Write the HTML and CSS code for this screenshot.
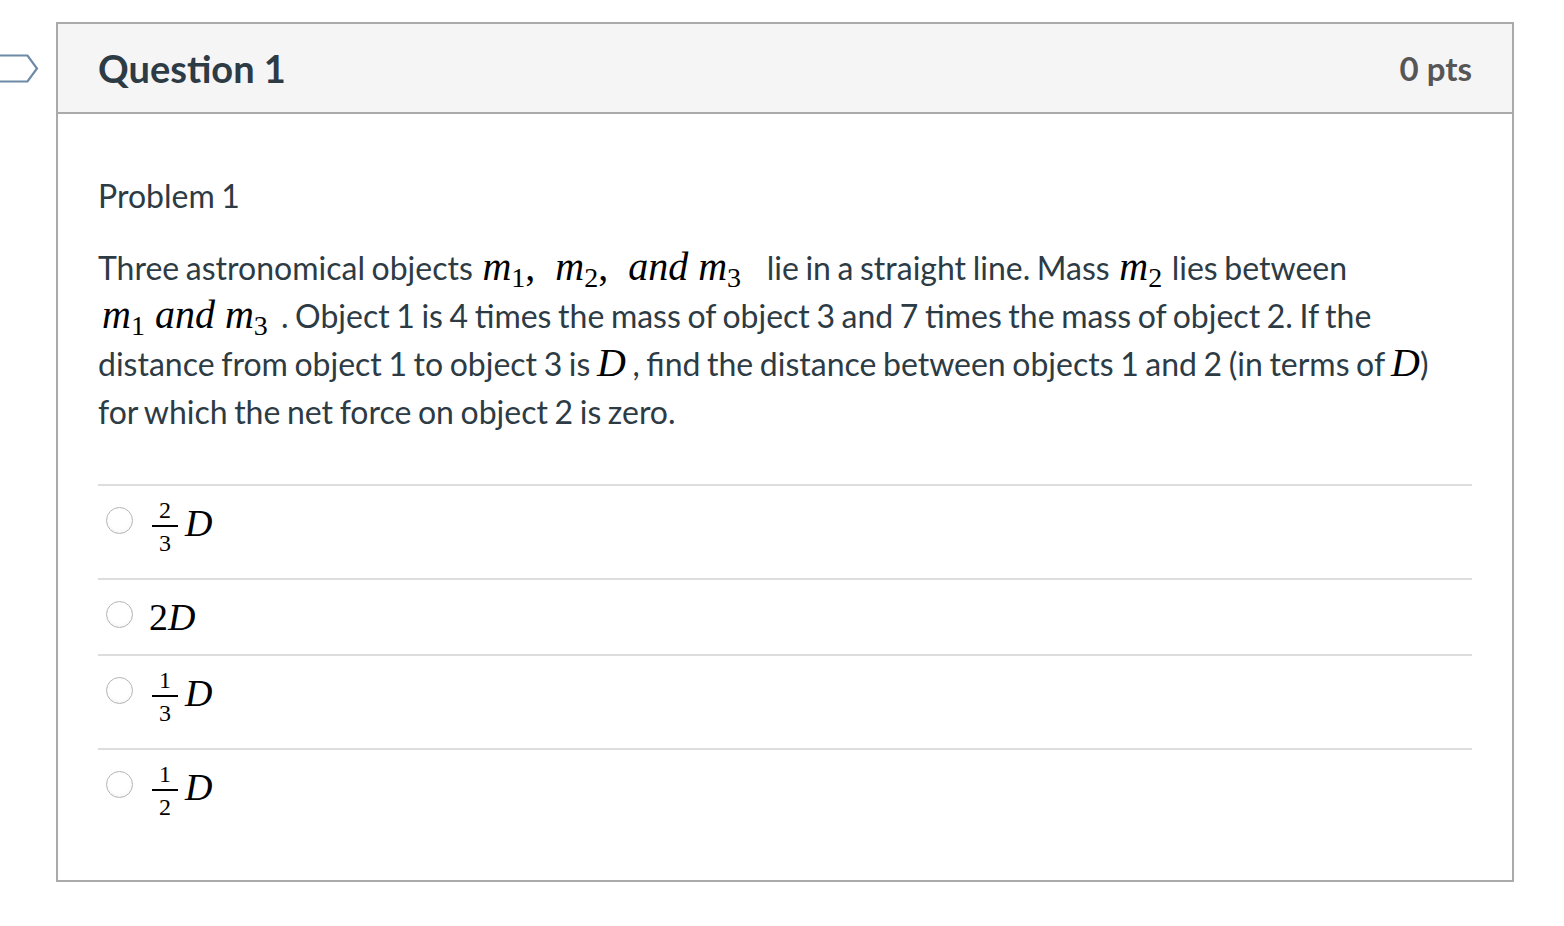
FILE: index.html
```html
<!DOCTYPE html>
<html lang="en">
<head>
<meta charset="utf-8">
<title>Question 1</title>
<link rel="stylesheet" href="styles.css">
</head>
<body>
<div class="page">
  <div class="flag">
    <svg width="40" height="30" viewBox="0 0 40 30"><path d="M-4 1.5 H27.5 L37 14.5 L27.5 27.5 H-4" fill="none" stroke="#6d8aa6" stroke-width="2.2"/></svg>
  </div>
  <div class="question">
    <div class="q-header">
      <h2 class="q-title">Question 1</h2>
      <div class="q-pts">0 pts</div>
    </div>
    <div class="q-body">
      <p class="para">Problem 1</p>
      <p class="para">Three astronomical objects <span class="math pad"><i>m</i><sub>1</sub>, &nbsp;<i>m</i><sub>2</sub>, &nbsp;<i>and</i> <i>m</i><sub>3</sub></span><span class="gap"></span> lie in a straight line. Mass <span class="math pad"><i>m</i><sub>2</sub></span> lies between <span class="math nowrap"><i class="lead">m</i><sub>1</sub> <i>and</i> <i>m</i><sub>3</sub></span>&nbsp; . Object 1 is 4 times the mass of object 3 and 7 times the mass of object 2. If the distance from object 1 to object 3 is <span class="math"><i>D</i></span> , find the distance between objects 1 and 2 (in terms of <span class="math"><i>D</i></span>) for which the net force on object 2 is zero.</p>
      <div class="answers">
        <label class="answer">
          <span class="radio-wrap"><span class="radio"></span></span>
          <span class="amath"><span class="frac"><span class="num">2</span><span class="den">3</span></span><i class="var">D</i></span>
        </label>
        <label class="answer">
          <span class="radio-wrap"><span class="radio"></span></span>
          <span class="amath"><span class="int">2</span><i class="var">D</i></span>
        </label>
        <label class="answer">
          <span class="radio-wrap"><span class="radio"></span></span>
          <span class="amath"><span class="frac"><span class="num">1</span><span class="den">3</span></span><i class="var">D</i></span>
        </label>
        <label class="answer">
          <span class="radio-wrap"><span class="radio"></span></span>
          <span class="amath"><span class="frac"><span class="num">1</span><span class="den">2</span></span><i class="var">D</i></span>
        </label>
      </div>
    </div>
  </div>
</div>
</body>
</html>
```
FILE: styles.css
```css
html, body {
  margin: 0;
  padding: 0;
  background: #fff;
}
body {
  font-family: Lato, "Noto Sans", sans-serif;
  color: #2d3b45;
}
.page {
  display: flex;
  align-items: flex-start;
  padding-top: 22px;
}
.flag {
  width: 56px;
  flex: none;
  padding-top: 32px;
}
.flag svg {
  display: block;
}
.question {
  width: 1454px;
  border: 2px solid #aaaaaa;
  box-sizing: content-box;
}
.q-header {
  display: flex;
  justify-content: space-between;
  align-items: center;
  height: 88px;
  background: #f5f5f5;
  border-bottom: 2px solid #aaaaaa;
  padding: 0 40px;
}
.q-title {
  margin: 0;
  font-size: 38px;
  font-weight: 700;
  color: #2d3b45;
}
.q-pts {
  font-size: 33px;
  font-weight: 700;
  color: #565656;
}
.q-body {
  padding: 34px 40px 38px 40px;
}
.para {
  margin: 24px 0;
  font-size: 32px;
  line-height: 48px;
  word-spacing: -1.6px;
}
.math {
  font-family: "Liberation Serif", "Times New Roman", serif;
  color: #000;
  font-size: 40px;
  line-height: 0;
  word-spacing: 0;
}
.math.pad {
  padding: 0 3px;
}
.gap {
  display: inline-block;
  width: 16px;
}
.nowrap {
  white-space: nowrap;
}
.math i {
  font-style: italic;
}
.math .lead {
  padding-left: 4px;
}
.math sub {
  font-size: 28px;
  vertical-align: -7px;
  line-height: 0;
}
.answers {
  margin-top: 48px;
}
.answer {
  display: flex;
  align-items: flex-start;
  gap: 16px;
  border-top: 2px solid #dddddd;
  padding: 10px 0 16px 8px;
}
.radio-wrap {
  display: flex;
  align-items: center;
  height: 48px;
  flex: none;
}
.radio {
  width: 25px;
  height: 25px;
  border-radius: 50%;
  border: 1px solid #b4b4b4;
  background: radial-gradient(circle at 50% 40%, #ffffff 55%, #ececec 100%);
}
.amath {
  display: flex;
  align-items: flex-start;
  font-family: "Liberation Serif", "Times New Roman", serif;
  color: #000;
}
.var {
  font-style: italic;
  font-size: 38px;
  line-height: 42px;
  padding-top: 6px;
}
.int {
  font-size: 38px;
  line-height: 42px;
  padding-top: 6px;
}
.frac {
  display: flex;
  flex-direction: column;
  align-items: stretch;
  font-size: 24px;
  line-height: 24px;
  margin: 2px 7px 7px 3px;
  text-align: center;
}
.num {
  border-bottom: 2px solid #000;
  padding: 0 7px 3px;
}
.den {
  padding-top: 4px;
}
```
